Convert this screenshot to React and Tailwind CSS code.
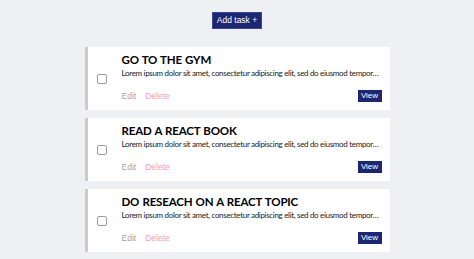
const tasks = [
  { id: 1, title: "GO TO THE GYM" },
  { id: 2, title: "READ A REACT BOOK" },
  { id: 3, title: "DO RESEACH ON A REACT TOPIC" },
];

const lorem =
  "Lorem ipsum dolor sit amet, consectetur adipiscing elit, sed do eiusmod tempor…";

function TaskCard({ task }) {
  return (
    <div className="flex h-[63px] bg-white border-l-[3px] border-[#c9cbcf]">
      {/* checkbox */}
      <div className="w-[34px] shrink-0 flex items-center pl-[9px]">
        <span className="block w-[10px] h-[10px] rounded-[2px] border border-[#9a9ca0] bg-white" />
      </div>
      <div className="flex-1 min-w-0 pt-[5px] pr-[8px]">
        <h2 className="text-[11.5px] leading-[15px] font-bold text-black tracking-[-0.15px] [word-spacing:0.5px]">{task.title}</h2>
        <p className="text-[8px] leading-[13px] text-[#222] tracking-[-0.32px] whitespace-nowrap">{lorem}</p>
        <div className="mt-[10px] h-[12px] flex items-center justify-between font-['Liberation_Sans',sans-serif]">
          <div className="flex gap-[9px] text-[8.5px]">
            <span className="text-[#a3a6ab]">Edit</span>
            <span className="text-[#f4a0ad]">Delete</span>
          </div>
          <button className="h-[12px] w-[24px] bg-[#1d2671] text-white text-[8px] leading-[12px]">View</button>
        </div>
      </div>
    </div>
  );
}

export default function App() {
  return (
    <div className="min-h-screen bg-[#eef0f3] font-['Lato',sans-serif] pt-[12px] flex flex-col items-center">
      <button className="h-[17px] w-[50px] bg-[#1d2671] text-white text-[8.5px] font-['Liberation_Sans',sans-serif] border border-[#3b4590]">
        Add task +
      </button>
      <div className="w-[305px] mt-[18px] flex flex-col gap-[8px]">
        {tasks.map((t) => (
          <TaskCard key={t.id} task={t} />
        ))}
      </div>
    </div>
  );
}
